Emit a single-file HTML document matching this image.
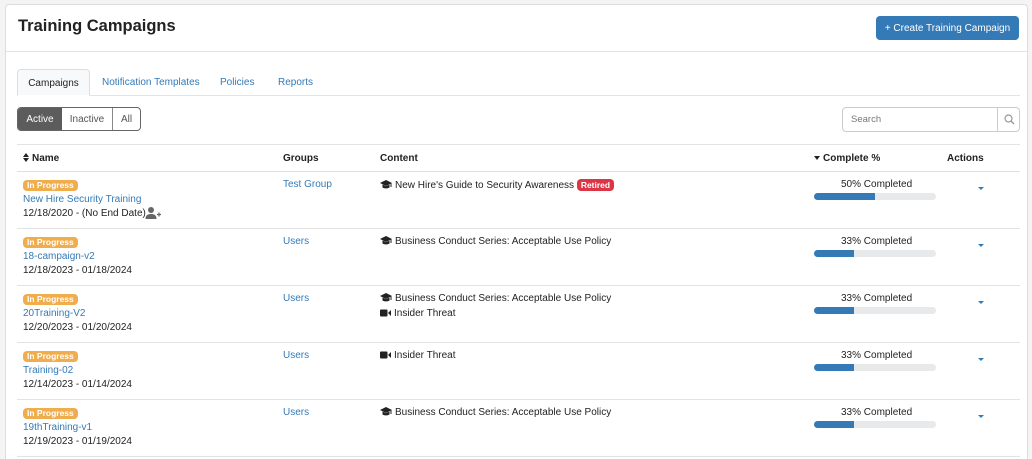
<!DOCTYPE html>
<html style="overflow:hidden;height:459px"><head><meta charset="utf-8"><style>
*{box-sizing:border-box;margin:0;padding:0}
body{width:1032px;height:459px;background:#f4f4f4;font-family:"Liberation Sans",Arial,sans-serif;font-size:10px;line-height:14px;color:#222;overflow:hidden;position:relative}
.card{position:absolute;left:5px;top:4px;width:1023px;height:455px;background:#fff;border:1px solid #ddd;border-bottom:none;border-radius:4px 4px 0 0}
.a{position:absolute;white-space:nowrap}
.link{color:#337ab7}
h1{position:absolute;left:18px;top:15px;font-size:16.5px;line-height:22px;font-weight:bold;color:#222}
.btn{position:absolute;left:876px;top:16px;width:143px;height:24px;background:#337ab7;color:#fff;border-radius:4px;font-size:10px;line-height:25px;text-align:center}
.hr{position:absolute;height:1px;background:#e3e3e3}
.tab{position:absolute;top:69px;height:27px;line-height:28px;font-size:10px}
.badge{position:absolute;background:#f0ad4e;color:#fff;font-weight:bold;font-size:8.5px;border-radius:4px;padding:0 4px;height:11px;line-height:11px}
.bar{position:absolute;left:814px;width:122px;height:7px;background:#e8e9eb;border-radius:4px;overflow:hidden}
.bar i{display:block;height:100%;background:#337ab7}
.caret{position:absolute;left:978px;width:0;height:0;border-left:3px solid transparent;border-right:3px solid transparent;border-top:3px solid #337ab7}
.ic{display:inline-block;vertical-align:-1px;margin-right:3px}
</style></head><body>
<div class="card"></div>
<h1>Training Campaigns</h1>
<div class="btn">+ Create Training Campaign</div>
<div class="hr" style="left:6px;top:51px;width:1021px"></div>
<div class="hr" style="left:17px;top:95px;width:1003px"></div>
<div class="tab" style="left:17px;width:73px;border:1px solid #ddd;border-bottom:1px solid #fff;border-radius:4px 4px 0 0;background:#f8f9fa;text-align:center">Campaigns</div>
<div class="tab link" style="left:102px">Notification Templates</div>
<div class="tab link" style="left:220px">Policies</div>
<div class="tab link" style="left:278px">Reports</div>
<div class="a" style="left:17px;top:107px;width:124px;height:24px;border:1px solid #666;border-radius:4px;overflow:hidden;display:flex;line-height:23px">
<div style="width:44px;background:#5c5c5c;color:#fff;text-align:center">Active</div>
<div style="width:51px;text-align:center;border-right:1px solid #888;color:#555">Inactive</div>
<div style="flex:1;text-align:center;color:#555">All</div></div>
<div class="a" style="left:842px;top:107px;width:178px;height:25px;border:1px solid #ccc;border-radius:4px">
<span class="a" style="left:8px;top:5px;color:#777;font-size:9.5px">Search</span>
<div class="a" style="left:154px;top:0;width:1px;height:23px;background:#ccc"></div>
<svg class="a" style="left:161px;top:6px" width="11" height="11" viewBox="0 0 11 11"><circle cx="4.5" cy="4.5" r="3.5" fill="none" stroke="#999" stroke-width="1.2"/><path d="M7 7l3 3" stroke="#999" stroke-width="1.4"/></svg></div>
<div class="hr" style="left:17px;top:144px;width:1003px"></div>
<div class="hr" style="left:17px;top:171px;width:1003px;background:#dde1e6"></div>
<div class="a" style="left:23px;top:152px;font-weight:bold"><svg class="ic" width="6" height="9" viewBox="0 0 6 9"><path d="M0 4L3 0L6 4ZM0 5L3 9L6 5Z" fill="#222"/></svg>Name</div>
<div class="a" style="left:283px;top:152px;font-weight:bold">Groups</div>
<div class="a" style="left:380px;top:152px;font-weight:bold">Content</div>
<div class="a" style="left:814px;top:152px;font-weight:bold"><svg class="ic" width="6" height="4" viewBox="0 0 6 4" style="vertical-align:1px"><path d="M0 0L6 0L3 4Z" fill="#222"/></svg>Complete %</div>
<div class="a" style="left:947px;top:152px;font-weight:bold">Actions</div>

<div class="badge" style="left:23px;top:180px">In Progress</div>
<div class="a link" style="left:23px;top:193px">New Hire Security Training</div>
<div class="a" style="left:23px;top:207px">12/18/2020 - (No End Date)</div>
<svg class="a" style="left:145px;top:207px" width="17" height="12" viewBox="0 0 17 12"><circle cx="6" cy="3" r="3" fill="#666"/><path d="M0.5 12c0-4 2.5-5 5.5-5s5.5 1 5.5 5z" fill="#666"/><path d="M12 7.5h4M14 5.5v4" stroke="#666" stroke-width="1.2"/></svg>
<div class="a link" style="left:283px;top:178px">Test Group</div>
<div class="a" style="left:380px;top:178px"><svg class="ic" width="12" height="9" viewBox="0 0 12 9"><path d="M0 3L6 0L12 3L6 6Z" fill="#222"/><path d="M2.5 4.5V7.5C4 8.7 8 8.7 9.5 7.5V4.5L6 6.3Z" fill="#222"/><path d="M11 3.2V7" stroke="#222"/></svg>New Hire's Guide to Security Awareness <span style="background:#dc3545;color:#fff;font-weight:bold;font-size:8.5px;border-radius:4px;padding:1px 4px">Retired</span></div>
<div class="a" style="left:841px;top:178px">50% Completed</div>
<div class="bar" style="top:193px"><i style="width:50%"></i></div>
<div class="caret" style="top:187px"></div>
<div class="hr" style="left:17px;top:228px;width:1003px"></div>

<div class="badge" style="left:23px;top:237px">In Progress</div>
<div class="a link" style="left:23px;top:250px">18-campaign-v2</div>
<div class="a" style="left:23px;top:264px">12/18/2023 - 01/18/2024</div>
<div class="a link" style="left:283px;top:235px">Users</div>
<div class="a" style="left:380px;top:235px"><svg class="ic" width="12" height="9" viewBox="0 0 12 9"><path d="M0 3L6 0L12 3L6 6Z" fill="#222"/><path d="M2.5 4.5V7.5C4 8.7 8 8.7 9.5 7.5V4.5L6 6.3Z" fill="#222"/><path d="M11 3.2V7" stroke="#222"/></svg>Business Conduct Series: Acceptable Use Policy</div>
<div class="a" style="left:841px;top:235px">33% Completed</div>
<div class="bar" style="top:250px"><i style="width:33%"></i></div>
<div class="caret" style="top:244px"></div>
<div class="hr" style="left:17px;top:285px;width:1003px"></div>

<div class="badge" style="left:23px;top:294px">In Progress</div>
<div class="a link" style="left:23px;top:307px">20Training-V2</div>
<div class="a" style="left:23px;top:321px">12/20/2023 - 01/20/2024</div>
<div class="a link" style="left:283px;top:292px">Users</div>
<div class="a" style="left:380px;top:292px"><svg class="ic" width="12" height="9" viewBox="0 0 12 9"><path d="M0 3L6 0L12 3L6 6Z" fill="#222"/><path d="M2.5 4.5V7.5C4 8.7 8 8.7 9.5 7.5V4.5L6 6.3Z" fill="#222"/><path d="M11 3.2V7" stroke="#222"/></svg>Business Conduct Series: Acceptable Use Policy</div>
<div class="a" style="left:380px;top:307px"><svg class="ic" width="11" height="8" viewBox="0 0 11 8"><rect x="0" y="0.5" width="7.5" height="7" rx="1" fill="#222"/><path d="M8 4L11 1V7Z" fill="#222"/></svg>Insider Threat</div>
<div class="a" style="left:841px;top:292px">33% Completed</div>
<div class="bar" style="top:307px"><i style="width:33%"></i></div>
<div class="caret" style="top:301px"></div>
<div class="hr" style="left:17px;top:342px;width:1003px"></div>

<div class="badge" style="left:23px;top:351px">In Progress</div>
<div class="a link" style="left:23px;top:364px">Training-02</div>
<div class="a" style="left:23px;top:378px">12/14/2023 - 01/14/2024</div>
<div class="a link" style="left:283px;top:349px">Users</div>
<div class="a" style="left:380px;top:349px"><svg class="ic" width="11" height="8" viewBox="0 0 11 8"><rect x="0" y="0.5" width="7.5" height="7" rx="1" fill="#222"/><path d="M8 4L11 1V7Z" fill="#222"/></svg>Insider Threat</div>
<div class="a" style="left:841px;top:349px">33% Completed</div>
<div class="bar" style="top:364px"><i style="width:33%"></i></div>
<div class="caret" style="top:358px"></div>
<div class="hr" style="left:17px;top:399px;width:1003px"></div>

<div class="badge" style="left:23px;top:408px">In Progress</div>
<div class="a link" style="left:23px;top:421px">19thTraining-v1</div>
<div class="a" style="left:23px;top:435px">12/19/2023 - 01/19/2024</div>
<div class="a link" style="left:283px;top:406px">Users</div>
<div class="a" style="left:380px;top:406px"><svg class="ic" width="12" height="9" viewBox="0 0 12 9"><path d="M0 3L6 0L12 3L6 6Z" fill="#222"/><path d="M2.5 4.5V7.5C4 8.7 8 8.7 9.5 7.5V4.5L6 6.3Z" fill="#222"/><path d="M11 3.2V7" stroke="#222"/></svg>Business Conduct Series: Acceptable Use Policy</div>
<div class="a" style="left:841px;top:406px">33% Completed</div>
<div class="bar" style="top:421px"><i style="width:33%"></i></div>
<div class="caret" style="top:415px"></div>
<div class="hr" style="left:17px;top:456px;width:1003px"></div>
</body></html>
